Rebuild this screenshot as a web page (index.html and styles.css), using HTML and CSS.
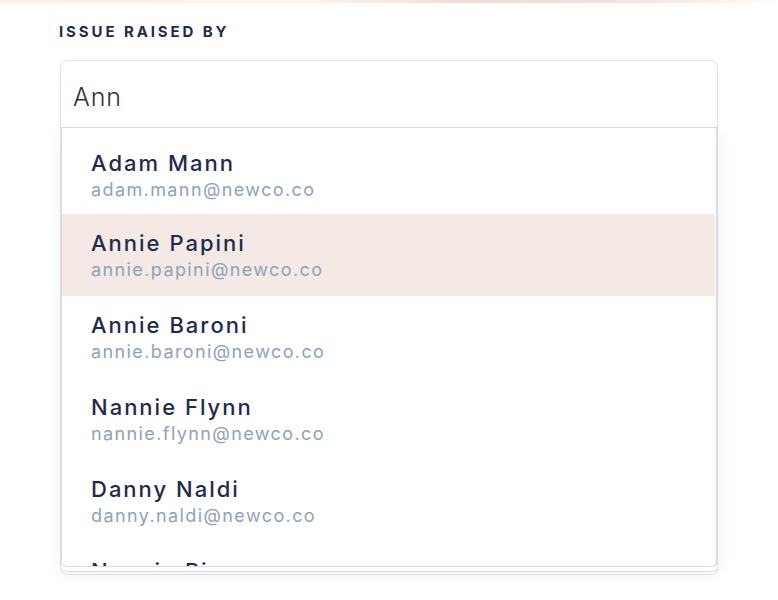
FILE: index.html
```html
<!DOCTYPE html>
<html lang="en">
<head>
<meta charset="utf-8">
<title>Issue raised by</title>
<link rel="stylesheet" href="styles.css">
</head>
<body>
<div class="topstrip"></div>
<main class="form">
  <label class="label" for="raised">ISSUE RAISED BY</label>
  <div class="field">
    <div class="input" id="raised">Ann</div>
    <div class="behind"></div>
    <ul class="dropdown">
      <li class="option"><span class="name">Adam Mann</span><span class="email">adam.mann@newco.co</span></li>
      <li class="option active"><span class="name">Annie Papini</span><span class="email">annie.papini@newco.co</span></li>
      <li class="option"><span class="name">Annie Baroni</span><span class="email">annie.baroni@newco.co</span></li>
      <li class="option"><span class="name">Nannie Flynn</span><span class="email">nannie.flynn@newco.co</span></li>
      <li class="option"><span class="name">Danny Naldi</span><span class="email">danny.naldi@newco.co</span></li>
      <li class="option"><span class="name">Nannie Piras</span><span class="email">nannie.piras@newco.co</span></li>
    </ul>
  </div>
</main>
</body>
</html>
```
FILE: styles.css
```css
* { box-sizing: border-box; }
html, body { margin: 0; padding: 0; background: #fff; }
body {
  font-family: "Inter", "Liberation Sans", sans-serif;
  width: 778px;
  height: 600px;
  overflow: hidden;
}
.topstrip {
  height: 3px;
  background: linear-gradient(90deg, #fbefe6 0%, #fdf3ea 40%, #f3ddd6 60%, #f4e2dc 80%, #fdf5ec 95%, #fff 100%);
}
.form {
  padding: 20px 60px 0 60px;
}
.label {
  display: block;
  font-size: 15px;
  font-weight: 700;
  letter-spacing: 2.9px;
  color: #1f2b4d;
  line-height: 18px;
  margin-left: -1px;
}
.field {
  position: relative;
  margin-top: 19px;
}
.input {
  height: 68px;
  border: 1px solid #dde2ec;
  border-radius: 7px 7px 0 0;
  padding: 21px 12px 0 12px;
  font-size: 25px;
  font-weight: 300;
  color: #333;
  line-height: 30px;
  letter-spacing: 0.9px;
}
.behind {
  height: 447px;
  border: 1px solid #e4e7ee;
  border-top: none;
  border-radius: 0 0 7px 7px;
}
.dropdown {
  position: absolute;
  top: 67px;
  left: 1px;
  right: 0;
  height: 440px;
  margin: 0;
  padding: 2px 0 0 0;
  list-style: none;
  background: #fff;
  border: 1px solid #d8dce7;
  border-right-width: 2px;
  border-radius: 0 0 6px 6px;
  overflow: hidden;
  box-shadow: 0 5px 0 -1px #fff, 0 6px 0 -1px #d9dde8, 0 6px 18px rgba(40, 50, 80, 0.08);
}
.option {
  display: flex;
  flex-direction: column;
  height: 82px;
  padding: 16px 30px 0 29px;
}
.option:first-child { height: 84px; padding-top: 20px; }
.option.active { background: #f4e9e4; margin-right: 1px; }
.name {
  font-size: 22px;
  font-weight: 500;
  color: #1f2b4d;
  line-height: 27px;
  letter-spacing: 2px;
}
.email {
  font-size: 18px;
  font-weight: 400;
  color: #8ea3b9;
  line-height: 22px;
  letter-spacing: 1.4px;
  margin-top: 2px;
}
```
